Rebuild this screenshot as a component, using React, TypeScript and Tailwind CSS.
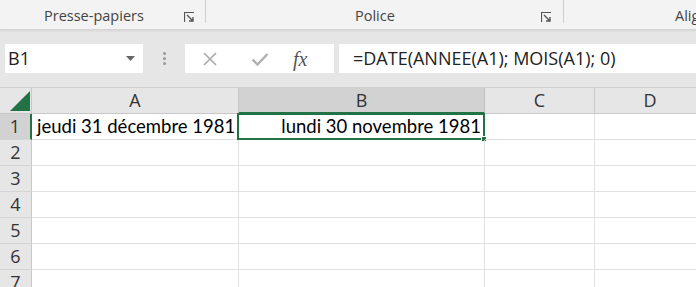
import React from "react";

const ui = { fontFamily: '"Open Sans", "Noto Sans", sans-serif' };
const cell = { fontFamily: 'Lato, "Open Sans", sans-serif' };

function Launcher() {
  return (
    <svg width="11" height="11" viewBox="0 0 11 11" className="text-[#555]">
      <path d="M0.5 10V0.5H10" fill="none" stroke="currentColor" strokeWidth="1.2" />
      <path d="M3 3L9 9M9 5V9H5" fill="none" stroke="currentColor" strokeWidth="1.4" />
    </svg>
  );
}

const cols = ["A", "B", "C", "D"];
const colW = ["w-[207px]", "w-[246px]", "w-[110px]", "w-[111px]"];
const rows = [1, 2, 3, 4, 5, 6, 7];

export default function App() {
  return (
    <div className="w-[696px] h-[287px] overflow-hidden bg-[#e6e6e6] text-[#222]" style={ui}>
      {/* Ribbon group labels */}
      <div className="flex h-[30px] overflow-hidden bg-[#f3f3f3] border-b border-[#d6d6d6] shadow-[0_1px_2px_rgba(0,0,0,0.08)] text-[14.5px] text-[#444]">
        <div className="flex w-[205px] shrink-0 items-center">
          <span className="pl-[44px] pt-[3px]">Presse-papiers</span>
          <span className="ml-auto mr-[10px] pt-[6px]"><Launcher /></span>
        </div>
        <div className="w-px h-[23px] shrink-0 bg-[#cfcfcf]" />
        <div className="flex w-[357px] shrink-0 items-center">
          <span className="pl-[149px] pt-[3px]">Police</span>
          <span className="ml-auto mr-[11px] pt-[6px]"><Launcher /></span>
        </div>
        <div className="w-px h-[23px] shrink-0 bg-[#cfcfcf]" />
        <div className="flex shrink-0 items-center">
          <span className="pl-[111px] pt-[3px] whitespace-nowrap">Alignement</span>
        </div>
      </div>

      {/* Formula bar */}
      <div className="flex h-[57px] items-start pt-[14px]">
        <div className="ml-[5px] flex h-[29px] w-[138px] items-center bg-white pl-[3px] pr-[8px] text-[18px]">
          <span>B1</span>
          <svg className="ml-auto" width="9" height="5" viewBox="0 0 9 5">
            <path d="M0 0H9L4.5 5Z" fill="#666" />
          </svg>
        </div>
        <div className="flex h-[29px] w-[42px] flex-col items-center justify-center gap-[2px]">
          <span className="h-[3px] w-[3px] rounded-full bg-[#999]" />
          <span className="h-[3px] w-[3px] rounded-full bg-[#999]" />
          <span className="h-[3px] w-[3px] rounded-full bg-[#999]" />
        </div>
        <div className="flex h-[29px] w-[149px] items-center bg-white">
          <svg className="ml-[17px]" width="16" height="16" viewBox="0 0 16 16">
            <path d="M2 2L14 14M14 2L2 14" stroke="#a9a9a9" strokeWidth="1.6" />
          </svg>
          <svg className="ml-[33px]" width="18" height="14" viewBox="0 0 18 14">
            <path d="M1.5 7.5L6.5 12.5L16.5 2" fill="none" stroke="#b0b0b0" strokeWidth="2.4" />
          </svg>
          <span className="ml-[24px] text-[20px] italic text-[#555]" style={{ fontFamily: '"Liberation Serif", serif' }}>
            fx
          </span>
        </div>
        <div className="ml-[5px] flex h-[29px] flex-1 items-center bg-white pl-[14px] text-[18px] whitespace-nowrap">
          =DATE(ANNEE(A1); MOIS(A1); 0)
        </div>
      </div>

      {/* Grid */}
      <div className="border-t border-[#d0d0d0]">
        <div className="flex h-[26px] bg-[#e6e6e6] text-[18px] text-[#333]">
          <div className="relative w-[32px] shrink-0 border-r border-b border-[#c8c8c8]">
            <svg className="absolute right-[1px] bottom-[2px]" width="20" height="20" viewBox="0 0 20 20">
              <path d="M20 0V20H0Z" fill="#217346" />
            </svg>
          </div>
          {cols.map((c, i) => (
            <div
              key={c}
              className={`${colW[i]} shrink-0 flex items-center justify-center border-r ${
                c === "B" ? "bg-[#d2d2d2] border-b-2 border-b-[#217346] border-r-[#c0c0c0]" : "border-b border-[#c8c8c8]"
              }`}
            >
              {c}
            </div>
          ))}
        </div>
        {rows.map((r) => (
          <div key={r} className="flex h-[26px] bg-white text-[18.5px]" style={cell}>
            <div
              className={`w-[32px] shrink-0 flex items-center justify-center border-b border-[#d4d4d4] text-[18px] text-[#333] ${
                r === 1 ? "bg-[#d2d2d2] border-r-2 border-r-[#217346]" : "bg-[#e6e6e6] border-r border-r-[#c8c8c8]"
              }`}
              style={ui}
            >
              {r}
            </div>
            {cols.map((c, i) => (
              <div
                key={c}
                className={`${colW[i]} shrink-0 relative flex items-center border-r border-b border-[#e1e1e1] whitespace-nowrap`}
              >
                {r === 1 && c === "A" && <span className="pl-[5px] text-black">jeudi 31 décembre 1981</span>}
                {r === 1 && c === "B" && (
                  <>
                    <span className="ml-auto pr-[3px] text-black">lundi 30 novembre 1981</span>
                    <div className="absolute -left-[2px] -top-[1px] -right-[1px] -bottom-[1px] border-2 border-[#217346]" />
                    <div className="absolute -right-[3px] -bottom-[3px] h-[6px] w-[6px] bg-[#217346] border border-white" />
                  </>
                )}
              </div>
            ))}
          </div>
        ))}
      </div>
    </div>
  );
}
